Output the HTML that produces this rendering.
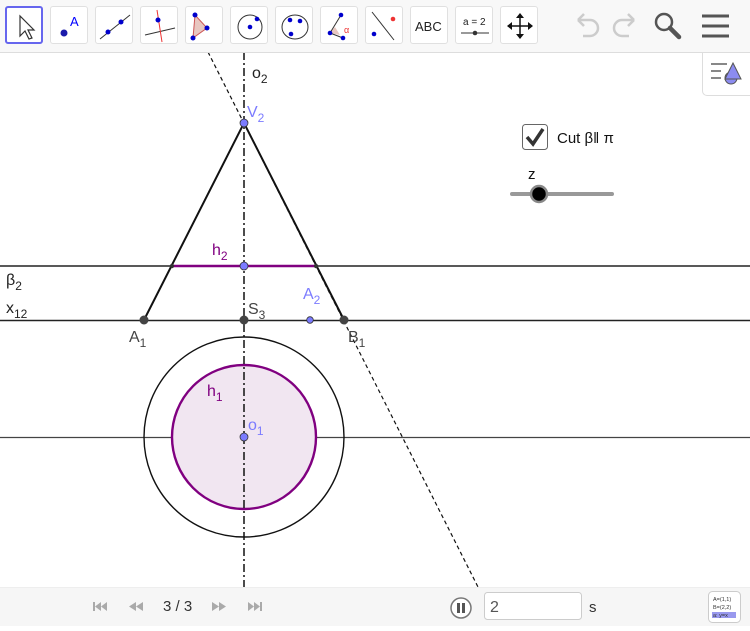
<!DOCTYPE html>
<html><head><meta charset="utf-8"><style>
body{margin:0;width:750px;height:625px;overflow:hidden;background:#fff;font-family:"Liberation Sans",sans-serif;position:relative}
.tb{position:absolute;left:0;top:0;width:750px;height:52px;background:#f8f8f8;border-bottom:1px solid #ddd}
.b{position:absolute;top:6px;width:38px;height:38px;background:#fff;border:1px solid #e0e0e0;border-radius:3px;box-sizing:border-box}
.b svg{position:absolute;left:0;top:0}
.sel{border:2px solid #6666ee}
.bot{position:absolute;left:0;top:587px;width:750px;height:38px;background:#f6f6f6;border-top:1px solid #eee}
</style></head><body>
<svg width="750" height="625" style="position:absolute;left:0;top:0" font-family="Liberation Sans, sans-serif">
<line x1="0" y1="266" x2="750" y2="266" stroke="#222" stroke-width="1.4"/>
<line x1="0" y1="320.5" x2="750" y2="320.5" stroke="#222" stroke-width="1.4"/>
<line x1="0" y1="437.5" x2="750" y2="437.5" stroke="#444" stroke-width="1.3"/>
<line x1="208" y1="52" x2="478" y2="587" stroke="#111" stroke-width="1.2" stroke-dasharray="4,3"/>
<circle cx="244" cy="437" r="100" fill="none" stroke="#111" stroke-width="1.4"/>
<circle cx="244" cy="437" r="72" fill="#f1e6f1" stroke="#800080" stroke-width="2.4"/>
<line x1="244" y1="52" x2="244" y2="587" stroke="#111" stroke-width="1.5" stroke-dasharray="8,3,2,3"/>
<polyline points="144,320 244,123 344,320" fill="none" stroke="#111" stroke-width="2"/>
<line x1="172" y1="266" x2="316" y2="266" stroke="#800080" stroke-width="2.6"/>
<circle cx="172" cy="266" r="2.2" fill="#333"/><circle cx="316" cy="266" r="2.2" fill="#333"/>
<g fill="#444"><circle cx="144" cy="320" r="4.5"/><circle cx="244" cy="320" r="4.5"/><circle cx="344" cy="320" r="4.5"/></g>
<g fill="#7b7bff" stroke="#333" stroke-width="0.8"><circle cx="244" cy="123" r="4"/><circle cx="244" cy="266" r="4"/><circle cx="310" cy="320" r="3.3"/><circle cx="244" cy="437" r="4"/></g>
<g font-size="16" fill="#222">
<text x="252" y="78">o<tspan font-size="12" dy="5">2</tspan></text>
<text x="6" y="285">β<tspan font-size="12" dy="5">2</tspan></text>
<text x="6" y="313">x<tspan font-size="12" dy="5">12</tspan></text>
<text x="129" y="342" fill="#444">A<tspan font-size="12" dy="5">1</tspan></text>
<text x="248" y="314" fill="#444">S<tspan font-size="12" dy="5">3</tspan></text>
<text x="348" y="342" fill="#444">B<tspan font-size="12" dy="5">1</tspan></text>
</g>
<text x="247" y="117" font-size="16" fill="#7b7bff">V<tspan font-size="12" dy="5">2</tspan></text>
<text x="303" y="299" font-size="16" fill="#7b7bff">A<tspan font-size="12" dy="5">2</tspan></text>
<text x="248" y="430" font-size="16" fill="#7b7bff">o<tspan font-size="12" dy="5">1</tspan></text>
<text x="212" y="255" font-size="16" fill="#800080">h<tspan font-size="12" dy="5">2</tspan></text>
<text x="207" y="396" font-size="16" fill="#800080">h<tspan font-size="12" dy="5">1</tspan></text>
<rect x="522.5" y="124.5" width="25" height="25" rx="3" fill="#fff" stroke="#666"/>
<path d="M527 137 L533 144 L543 129" fill="none" stroke="#333" stroke-width="3.5"/>
<text x="557" y="143" font-size="15" fill="#111">Cut β‖ π</text>
<text x="528" y="179" font-size="15" fill="#111">z</text>
<line x1="512" y1="194" x2="612" y2="194" stroke="#999" stroke-width="4" stroke-linecap="round"/>
<circle cx="539" cy="194" r="8" fill="#000" stroke="#888" stroke-width="2.5"/>
</svg>
<div class="tb">
<div class="b sel" style="left:5px"><svg width="38" height="38"><path d="M13 8 L13 28 L18 23 L22 31 L25 30 L21 22 L27 22 Z" fill="#fff" stroke="#333" stroke-width="1.2"/></svg></div>
<div class="b" style="left:50px"><svg width="38" height="38"><circle cx="13" cy="26" r="3.5" fill="#1a1aaa"/><text x="19" y="19" font-size="13" fill="#00f" font-family="Liberation Sans">A</text></svg></div>
<div class="b" style="left:95px"><svg width="38" height="38"><line x1="4" y1="32" x2="34" y2="8" stroke="#333"/><circle cx="12" cy="25" r="2.5" fill="#00c"/><circle cx="25" cy="15" r="2.5" fill="#00c"/></svg></div>
<div class="b" style="left:140px"><svg width="38" height="38"><line x1="4" y1="28" x2="34" y2="21" stroke="#333"/><line x1="16" y1="3" x2="21" y2="35" stroke="#e33"/><circle cx="17" cy="13" r="2.5" fill="#00c"/></svg></div>
<div class="b" style="left:185px"><svg width="38" height="38"><path d="M9 8 L21 21 L7 31 Z" fill="#e8c6c0" stroke="#c55"/><g fill="#00c"><circle cx="9" cy="8" r="2.5"/><circle cx="21" cy="21" r="2.5"/><circle cx="7" cy="31" r="2.5"/></g></svg></div>
<div class="b" style="left:230px"><svg width="38" height="38"><circle cx="19" cy="20" r="12" fill="none" stroke="#333"/><circle cx="19" cy="20" r="2.3" fill="#00c"/><circle cx="26" cy="12" r="2.3" fill="#00c"/></svg></div>
<div class="b" style="left:275px"><svg width="38" height="38"><ellipse cx="19" cy="20" rx="13" ry="12" fill="none" stroke="#333"/><g fill="#00c"><circle cx="14" cy="13" r="2.3"/><circle cx="24" cy="14" r="2.3"/><circle cx="15" cy="27" r="2.3"/></g></svg></div>
<div class="b" style="left:320px"><svg width="38" height="38"><path d="M9 26 L19 28 L14 20 Z" fill="#e8c6c0"/><path d="M20 8 L9 26 L22 31" fill="none" stroke="#333"/><g fill="#00c"><circle cx="20" cy="8" r="2.3"/><circle cx="9" cy="26" r="2.3"/><circle cx="22" cy="31" r="2.3"/></g><text x="23" y="26" font-size="9" fill="#e33">α</text></svg></div>
<div class="b" style="left:365px"><svg width="38" height="38"><line x1="6" y1="5" x2="28" y2="33" stroke="#333"/><circle cx="27" cy="12" r="2.3" fill="#e33"/><circle cx="8" cy="27" r="2.3" fill="#00c"/></svg></div>
<div class="b" style="left:410px"><svg width="38" height="38"><text x="4" y="24" font-size="13" fill="#222" font-family="Liberation Sans">ABC</text></svg></div>
<div class="b" style="left:455px"><svg width="38" height="38"><text x="7" y="18" font-size="10" fill="#222" font-family="Liberation Sans">a = 2</text><line x1="5" y1="26" x2="33" y2="26" stroke="#333"/><circle cx="19" cy="26" r="2.3" fill="#333"/></svg></div>
<div class="b" style="left:500px"><svg width="38" height="38"><g stroke="#111" stroke-width="1.5"><line x1="19" y1="7" x2="19" y2="31"/><line x1="7" y1="19" x2="31" y2="19"/></g><g fill="#111"><path d="M19 6 L15 11 L23 11Z"/><path d="M19 32 L15 27 L23 27Z"/><path d="M6 19 L11 15 L11 23Z"/><path d="M32 19 L27 15 L27 23Z"/></g></svg></div>
<svg width="750" height="52" style="position:absolute;left:0;top:0">
<g fill="none" stroke="#ccc" stroke-width="2.5"><path d="M578 20 L590 20 A7 7 0 0 1 590 36 L583 36"/><path d="M578 20 L584 14 M578 20 L584 26"/><path d="M634 20 L622 20 A7 7 0 0 0 622 36 L629 36"/><path d="M634 20 L628 14 M634 20 L628 26"/></g>
<circle cx="664" cy="22" r="8" fill="none" stroke="#555" stroke-width="2.5"/><line x1="670" y1="28" x2="679" y2="37" stroke="#555" stroke-width="4.5" stroke-linecap="round"/>
<g stroke="#555" stroke-width="3"><line x1="702" y1="16" x2="729" y2="16"/><line x1="702" y1="26" x2="729" y2="26"/><line x1="702" y1="36" x2="729" y2="36"/></g>
</svg>
</div>
<div style="position:absolute;left:702px;top:53px;width:48px;height:42px;background:#fff;border:1px solid #ddd;border-top:none;border-right:none;border-radius:0 0 0 5px">
<svg width="48" height="42"><g stroke="#888" stroke-width="2"><line x1="8" y1="11" x2="24" y2="11"/><line x1="8" y1="18" x2="18" y2="18"/><line x1="8" y1="25" x2="18" y2="25"/></g><circle cx="28" cy="25" r="6" fill="#8c8cf0" stroke="#555"/><path d="M30 10 L38 26 L22 26Z" fill="#8c8cf0" stroke="#555"/></svg></div>
<div class="bot">
<svg width="750" height="38" font-family="Liberation Sans, sans-serif">
<g fill="#aaa"><rect x="93" y="14" width="2" height="9"/><path d="M95 18.5 L101 14 L101 23Z M101 18.5 L107 14 L107 23Z"/>
<path d="M129 18.5 L136 14 L136 23Z M136 18.5 L143 14 L143 23Z"/>
<path d="M212 14 L219 18.5 L212 23Z M219 14 L226 18.5 L219 23Z"/>
<path d="M248 14 L254 18.5 L248 23Z M254 14 L260 18.5 L254 23Z"/><rect x="260" y="14" width="2" height="9"/></g>
<text x="163" y="23" font-size="15" fill="#333">3 / 3</text>
<circle cx="461" cy="20" r="10" fill="#fff" stroke="#777" stroke-width="1.5"/><rect x="457" y="15" width="3" height="10" fill="#555"/><rect x="462" y="15" width="3" height="10" fill="#555"/>
<rect x="484.5" y="4.5" width="97" height="27" rx="3" fill="#fff" stroke="#ccc"/>
<text x="490" y="24" font-size="16" fill="#555">2</text>
<text x="589" y="24" font-size="15" fill="#333">s</text>
<rect x="708.5" y="3.5" width="32" height="31" rx="4" fill="#fff" stroke="#ccc"/>
<text x="713" y="13" font-size="5.5" fill="#333">A=(1,1)</text><text x="713" y="21" font-size="5.5" fill="#333">B=(2,2)</text>
<rect x="712" y="24" width="24" height="6" fill="#9999ee"/><text x="713" y="29" font-size="5.5" fill="#333">a: y=x</text>
</svg></div>
</body></html>
